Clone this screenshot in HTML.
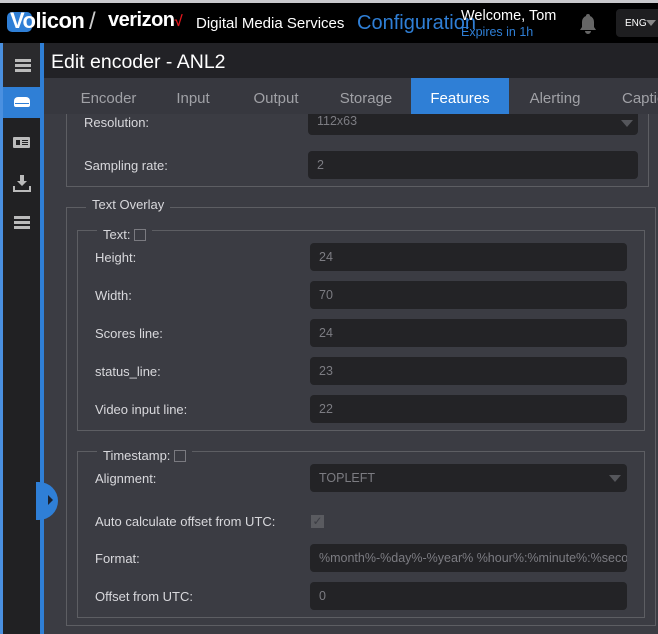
<!DOCTYPE html>
<html><head><meta charset="utf-8"><style>
*{box-sizing:border-box;margin:0;padding:0}
body{width:658px;height:634px;overflow:hidden;background:#3b3c43;font-family:"Liberation Sans","DejaVu Sans",sans-serif;position:relative}
.a{position:absolute}
.lbl{position:absolute;color:#d8d8dc;font-size:13px;white-space:nowrap}
.inp{position:absolute;background:#232326;border-radius:4px;color:#7c7c82;font-size:12.5px;padding-left:9px;display:flex;align-items:center;white-space:nowrap;overflow:hidden}
.fs{position:absolute;border:1px solid #5d5e63}
.lg{position:absolute;background:#3b3c43;color:#d8d8dc;font-size:13px;padding:0 6px;white-space:nowrap}
.cb{display:inline-block;width:12px;height:12px;border:1px solid #7a7a80;vertical-align:-2px;margin-left:4px}
.tab{position:absolute;top:78px;height:36px;line-height:42px;color:#a0a1a6;font-size:15px;text-align:center;z-index:2}
.arr{position:absolute;width:0;height:0;border-left:6px solid transparent;border-right:6px solid transparent;border-top:7px solid #55565b}
</style></head><body>
<div class="a" style="left:0;top:0;width:658px;height:3px;background:#c8c8cc"></div>
<div class="a" style="left:0;top:3px;width:658px;height:40px;background:#000"></div>
<div class="a" style="left:7px;top:12px;width:25px;height:20px;background:#2f7fd6;border-radius:5px"></div>
<div class="a" style="left:10px;top:8px;color:#fff;font-size:22px;font-weight:bold;letter-spacing:-0.5px">Volicon</div>
<div class="a" style="left:89px;top:8px;color:#ccc;font-size:24px;font-weight:200">/</div>
<div class="a" style="left:108px;top:9px;color:#fff;font-size:20px;font-weight:bold;letter-spacing:-0.5px">verizon<span style="color:#e0161c;font-size:15px">√</span></div>
<div class="a" style="left:196px;top:15px;color:#fff;font-size:15px">Digital Media Services</div>
<div class="a" style="left:357px;top:12px;color:#2f7fd6;font-size:20px">Configuration</div>
<div class="a" style="left:461px;top:8px;color:#fff;font-size:14.5px">Welcome, Tom</div>
<div class="a" style="left:461px;top:25px;color:#2f7fd6;font-size:12.5px">Expires in 1h</div>
<svg class="a" style="left:579px;top:13px" width="18" height="22" viewBox="0 0 18 22"><path d="M9 1a2 2 0 0 1 2 2 6 6 0 0 1 4 6v5l2 3H1l2-3V9a6 6 0 0 1 4-6 2 2 0 0 1 2-2zM6 18h6a3 3 0 0 1-6 0z" fill="#666"/></svg>
<div class="a" style="left:616px;top:9px;width:50px;height:28px;background:#1e1e20;border-radius:4px;color:#fff;font-size:10px;padding:9px 0 0 9px">ENG</div>
<div class="arr" style="left:646px;top:20px;border-top-color:#888;border-width:6px 5px 0 5px"></div>
<!-- sidebar -->
<div class="a" style="left:0;top:43px;width:3px;height:591px;background:#4a90e0"></div>
<div class="a" style="left:3px;top:43px;width:37px;height:591px;background:#212123"></div>
<div class="a" style="left:3px;top:43px;width:37px;height:44px;background:#2a2a2d"></div>
<div class="a" style="left:3px;top:87px;width:37px;height:31px;background:#2f7fd6"></div>
<div class="a" style="left:40px;top:43px;width:4px;height:591px;background:#2f7fd6"></div>
<div class="a" style="left:15px;top:59px;width:16px;height:3px;background:#bbb;box-shadow:0 5px 0 #bbb,0 10px 0 #bbb"></div>
<div class="a" style="left:14px;top:97px;width:16px;height:10px;background:#fff;border-radius:4px 4px 2px 2px"></div>
<div class="a" style="left:15px;top:103px;width:14px;height:1px;background:#2f7fd6"></div>
<div class="a" style="left:13px;top:137px;width:17px;height:11px;background:#bbb;border-radius:1px"></div>
<div class="a" style="left:16px;top:140px;width:4px;height:5px;background:#212123"></div>
<div class="a" style="left:22px;top:140px;width:6px;height:1px;background:#212123;box-shadow:0 2px 0 #212123,0 4px 0 #212123"></div>
<svg class="a" style="left:13px;top:175px" width="18" height="17" viewBox="0 0 18 17"><path d="M7 0h4v6h3l-5 5-5-5h3z M0 11h2v4h14v-4h2v6H0z" fill="#bbb"/></svg>
<div class="a" style="left:14px;top:216px;width:16px;height:3px;background:#bbb;box-shadow:0 5px 0 #bbb,0 10px 0 #bbb"></div>
<div class="a" style="left:36px;top:482px;width:22px;height:38px;background:#2f7fd6;border-radius:0 19px 19px 0"></div>
<div class="a" style="left:48px;top:495px;border-top:5px solid transparent;border-bottom:5px solid transparent;border-left:5px solid #1a2230"></div>
<!-- title -->
<div class="a" style="left:44px;top:43px;width:614px;height:35px;background:#222226"></div>
<div class="a" style="left:51px;top:51px;color:#fff;font-size:19.5px">Edit encoder - ANL2</div>
<div class="fs" style="left:66px;top:100px;width:583px;height:87px;border-top:none"></div>
<div class="a" style="left:44px;top:78px;width:614px;height:36px;background:#37383f;z-index:1"></div>
<div class="tab" style="left:66px;width:85px">Encoder</div>
<div class="tab" style="left:160px;width:66px">Input</div>
<div class="tab" style="left:240px;width:72px">Output</div>
<div class="tab" style="left:326px;width:80px">Storage</div>
<div class="tab" style="left:411px;width:98px;background:#2f7fd6;color:#fff">Features</div>
<div class="tab" style="left:515px;width:80px">Alerting</div>
<div class="tab" style="left:622px;width:60px;text-align:left">Captions</div>
<div class="inp" style="left:308px;top:107px;width:330px;height:28px">112x63</div>
<div class="arr" style="left:621px;top:120px"></div>
<div class="lbl" style="left:84px;top:115px">Resolution:</div>
<div class="lbl" style="left:84px;top:158px">Sampling rate:</div>
<div class="inp" style="left:308px;top:151px;width:330px;height:28px">2</div>
<!-- text overlay -->
<div class="fs" style="left:66px;top:207px;width:590px;height:419px"></div>
<div class="lg" style="left:86px;top:197px">Text Overlay</div>
<div class="fs" style="left:77px;top:230px;width:568px;height:201px"></div>
<div class="lg" style="left:97px;top:227px">Text:<span class="cb"></span></div>
<div class="lbl" style="left:95px;top:250px">Height:</div>
<div class="inp" style="left:310px;top:243px;width:317px;height:28px">24</div>
<div class="lbl" style="left:95px;top:288px">Width:</div>
<div class="inp" style="left:310px;top:281px;width:317px;height:28px">70</div>
<div class="lbl" style="left:95px;top:326px">Scores line:</div>
<div class="inp" style="left:310px;top:319px;width:317px;height:28px">24</div>
<div class="lbl" style="left:95px;top:364px">status_line:</div>
<div class="inp" style="left:310px;top:357px;width:317px;height:28px">23</div>
<div class="lbl" style="left:95px;top:402px">Video input line:</div>
<div class="inp" style="left:310px;top:395px;width:317px;height:28px">22</div>
<div class="fs" style="left:77px;top:451px;width:568px;height:167px"></div>
<div class="lg" style="left:97px;top:448px">Timestamp:<span class="cb"></span></div>
<div class="lbl" style="left:95px;top:471px">Alignment:</div>
<div class="inp" style="left:310px;top:464px;width:317px;height:28px">TOPLEFT</div>
<div class="arr" style="left:609px;top:475px"></div>
<div class="lbl" style="left:95px;top:514px">Auto calculate offset from UTC:</div>
<div class="a" style="left:311px;top:515px;width:13px;height:13px;background:#5a5b60;color:#3b3c43;font-size:12px;line-height:13px;text-align:center;font-weight:bold">✓</div>
<div class="lbl" style="left:95px;top:551px">Format:</div>
<div class="inp" style="left:310px;top:544px;width:317px;height:28px">%month%-%day%-%year% %hour%:%minute%:%second%</div>
<div class="lbl" style="left:95px;top:589px">Offset from UTC:</div>
<div class="inp" style="left:310px;top:582px;width:317px;height:28px">0</div>
</body></html>
